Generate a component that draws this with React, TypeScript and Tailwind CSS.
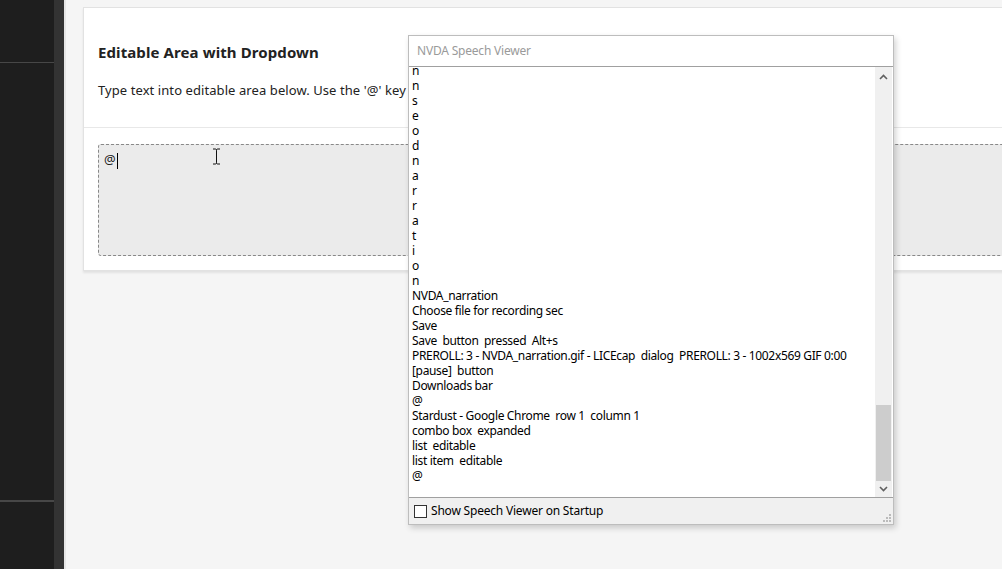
const lines = [
  "n", "n", "s", "e", "o", "d", "n", "a", "r", "r", "a", "t", "i", "o", "n",
  "NVDA_narration",
  "Choose file for recording sec",
  "Save",
  "Save  button  pressed  Alt+s",
  "PREROLL: 3 - NVDA_narration.gif - LICEcap  dialog  PREROLL: 3 - 1002x569 GIF 0:00",
  "[pause]  button",
  "Downloads bar",
  "@",
  "Stardust - Google Chrome  row 1  column 1",
  "combo box  expanded",
  "list  editable",
  "list item  editable",
  "@",
];

function SpeechViewer() {
  return (
    <div className="absolute left-[408px] top-[35px] w-[486px] h-[490px] flex flex-col bg-[#f0f0f0] border border-[#bdbdbd] shadow-[2px_3px_6px_rgba(0,0,0,0.18)] font-['Noto_Sans',sans-serif] text-[12px] text-black">
      {/* title field */}
      <div className="h-[31px] shrink-0 bg-white border-b border-[#a0a0a0] flex items-center px-[8px] text-[#9a9a9a] tracking-[-0.2px]">
        NVDA Speech Viewer
      </div>
      {/* list */}
      <div className="flex-1 flex bg-white border-b border-[#a0a0a0] overflow-hidden">
        <div className="flex-1 overflow-hidden pl-[3px] tracking-[-0.34px]">
          <div className="-mt-[4px]">
            {lines.map((l, i) => (
              <div key={i} className="h-[15px] leading-[15px] whitespace-pre">{l}</div>
            ))}
          </div>
        </div>
        <div className="w-[17px] shrink-0 bg-[#f0f0f0] flex flex-col items-center mr-[1px]">
          <svg width="9" height="6" viewBox="0 0 9 6" className="mt-[7px]">
            <path d="M1 5 L4.5 1.5 L8 5" stroke="#606060" strokeWidth="1.6" fill="none" />
          </svg>
          <div className="flex-1" />
          <div className="w-[15px] h-[76px] bg-[#cdcdcd]" />
          <svg width="9" height="6" viewBox="0 0 9 6" className="mt-[5px] mb-[5px]">
            <path d="M1 1 L4.5 4.5 L8 1" stroke="#606060" strokeWidth="1.6" fill="none" />
          </svg>
        </div>
      </div>
      {/* footer */}
      <div className="h-[26px] shrink-0 flex items-center pl-[5px] relative tracking-[-0.2px]">
        <div className="w-[13px] h-[13px] border border-[#333] bg-white mr-[4px]" />
        <span>Show Speech Viewer on Startup</span>
        <svg width="8" height="8" viewBox="0 0 8 8" className="absolute right-[2px] bottom-[2px]">
          <rect x="6" y="0" width="2" height="2" fill="#bbb" />
          <rect x="3" y="3" width="2" height="2" fill="#bbb" />
          <rect x="6" y="3" width="2" height="2" fill="#bbb" />
          <rect x="0" y="6" width="2" height="2" fill="#bbb" />
          <rect x="3" y="6" width="2" height="2" fill="#bbb" />
          <rect x="6" y="6" width="2" height="2" fill="#bbb" />
        </svg>
      </div>
    </div>
  );
}

export default function App() {
  return (
    <div className="relative w-[1002px] h-[569px] overflow-hidden flex bg-[#f5f5f5] font-['Noto_Sans',sans-serif]">
      {/* sidebar */}
      <div className="w-[54px] shrink-0 h-full bg-[#1e1e1e] flex flex-col">
        <div className="h-[63px] border-b border-[#474747]" />
        <div className="h-[439px] border-b-2 border-[#474747]" />
      </div>
      <div className="w-[10px] shrink-0 h-full bg-[#333333]" />
      <div className="w-[2px] shrink-0 h-full bg-[#e6e6e6]" />

      {/* main */}
      <div className="flex-1 pl-[17px] pt-[7px]">
        <div className="w-[960px] bg-white border border-[#e2e2e2] shadow-[0_2px_2px_rgba(0,0,0,0.08)]">
          <div className="px-[14px] pt-[34px] pb-[28px] border-b border-[#e8e8e8]">
            <h2 className="text-[15px] font-bold text-[#222] leading-[20px] tracking-[0.1px]">Editable Area with Dropdown</h2>
            <p className="mt-[19px] text-[13px] text-[#222] leading-[18px] tracking-[0.08px]">
              Type text into editable area below. Use the '@' key to open a dropdown with options.
            </p>
          </div>
          <div className="px-[14px] pt-[16px] pb-[14px]">
            <div className="h-[112px] bg-[#ebebeb] border border-dashed border-[#888] rounded-[3px] px-[5px] pt-[5px] text-[13px] text-[#222] relative">
              <span>@</span>
              <span className="inline-block w-px h-[16px] bg-black align-middle ml-px" />
              {/* I-beam cursor */}
              <svg width="9" height="17" viewBox="0 0 9 17" className="absolute left-[113px] top-[3px]">
                <path d="M1 1 H3.5 Q4.5 1 4.5 2.5 V14.5 Q4.5 16 3.5 16 H1 M8 1 H5.5 Q4.5 1 4.5 2.5 M4.5 14.5 Q4.5 16 5.5 16 H8" stroke="#111" strokeWidth="1" fill="none" />
              </svg>
            </div>
          </div>
        </div>
      </div>

      <SpeechViewer />
    </div>
  );
}
